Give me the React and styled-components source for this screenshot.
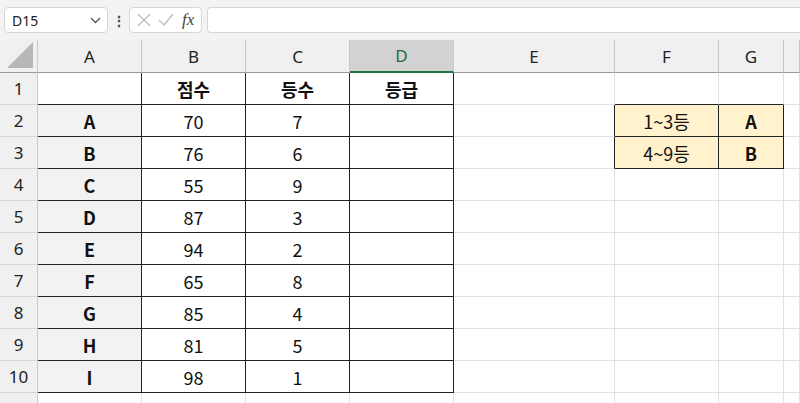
import React from "react";
import styled, { createGlobalStyle } from "styled-components";

const Global = createGlobalStyle`
  body { margin: 0; background: #fff; font-family: "Noto Sans CJK KR", "Noto Sans", sans-serif; overflow: hidden; }
`;

const Bar = styled.div`
  height: 40px; display: flex; align-items: center; gap: 0; background: #f3f3f3;
  padding-left: 4px; box-sizing: border-box;
`;
const NameBox = styled.div`
  width: 104px; height: 26px; box-sizing: border-box; border: 1px solid #d6d6d6; border-radius: 4px;
  background: #fff; display: flex; align-items: center; justify-content: space-between;
  padding: 0 6px 0 7px; font-size: 14px; color: #222; font-family: "Noto Sans", sans-serif;
`;
const Dots = styled.div`width: 21px; text-align: center; color: #444; font-size: 14px; font-weight: bold;`;
const FxBox = styled.div`
  width: 73px; height: 26px; box-sizing: border-box; border: 1px solid #d6d6d6; border-radius: 4px;
  background: #fff; display: flex; align-items: center; justify-content: space-around; padding: 0 3px;
  color: #bbb; font-size: 16px;
`;
const Fx = styled.span`font-family: "Liberation Serif", serif; font-style: italic; color: #444; font-size: 17px;`;
const Formula = styled.div`
  flex: 1; height: 26px; margin-left: 5px; box-sizing: border-box; border: 1px solid #d6d6d6;
  border-radius: 4px 0 0 4px; border-right: none; background: #fff;
`;

const Grid = styled.div`
  display: grid;
  grid-template-columns: 38px 104px 104px 104px 104px 161px 104px 65px 1fr;
  grid-template-rows: 33px repeat(10, 32px) 20px;
`;
const Corner = styled.div`
  background: #f0f0f0; border-right: 1px solid #c8c8c8; border-bottom: 1px solid #9a9a9a;
  position: relative;
  &::after { content: ""; position: absolute; right: 4px; bottom: 4px; width: 0; height: 0;
    border-left: 26px solid transparent; border-bottom: 26px solid #b7b7b7; }
`;
const ColHead = styled.div`
  background: ${p => (p.$sel ? "#d2d2d2" : "#f0f0f0")};
  color: ${p => (p.$sel ? "#1f6b3a" : "#222")};
  border-right: 1px solid #c8c8c8;
  border-bottom: ${p => (p.$sel ? "2px solid #217346" : "1px solid #9a9a9a")};
  display: flex; align-items: center; justify-content: center; font-size: 17px;
  font-family: "Noto Sans", sans-serif; box-sizing: border-box;
`;
const RowHead = styled.div`
  background: #f0f0f0; border-right: 1px solid #c8c8c8; border-bottom: 1px solid #d4d4d4;
  display: flex; align-items: center; justify-content: center; font-size: 17px; color: #222;
  font-family: "Noto Sans", sans-serif; box-sizing: border-box;
`;
const Cell = styled.div`
  box-sizing: border-box;
  background: ${p => p.$bg || "#fff"};
  border-right: 1px solid ${p => (p.$r ? "#222" : "#e1e1e1")};
  border-bottom: 1px solid ${p => (p.$b ? "#222" : "#e1e1e1")};
  display: flex; align-items: center; justify-content: center;
  font-size: 18px; color: #111; font-weight: ${p => (p.$bold ? 700 : 400)};
`;

const cols = ["A", "B", "C", "D", "E", "F", "G", ""];
const data = [
  ["", "점수", "등수", "등급"],
  ["A", "70", "7", ""], ["B", "76", "6", ""], ["C", "55", "9", ""], ["D", "87", "3", ""],
  ["E", "94", "2", ""], ["F", "65", "8", ""], ["G", "85", "4", ""], ["H", "81", "5", ""],
  ["I", "98", "1", ""],
];
const side = { 2: ["1~3등", "A"], 3: ["4~9등", "B"] };

export default function App() {
  const rows = [];
  for (let r = 1; r <= 11; r++) {
    rows.push(<RowHead key={"h" + r}>{r <= 10 ? r : ""}</RowHead>);
    for (let c = 0; c < 8; c++) {
      let text = "", bold = false, bg, right = false, bottom = false;
      if (r <= 10 && c < 4) {
        text = data[r - 1][c];
        bold = r === 1 || c === 0;
        if (c === 0 && r > 1) bg = "#f2f2f2";
        right = true; bottom = true;
      }
      if (r === 1 && (c === 5 || c === 6)) bottom = true;
      if ((r === 2 || r === 3) && c === 4) right = true;
      if ((r === 2 || r === 3) && (c === 5 || c === 6)) {
        text = side[r][c - 5]; bold = c === 6; bg = "#fff2cc"; right = true; bottom = true;
      }
      rows.push(<Cell key={r + "-" + c} $bold={bold} $bg={bg} $r={right} $b={bottom}>{text}</Cell>);
    }
  }
  return (
    <>
      <Global />
      <Bar>
        <NameBox>D15
          <svg width="11" height="7" viewBox="0 0 11 7"><path d="M1 1l4.5 4.5L10 1" fill="none" stroke="#555" strokeWidth="1.3" /></svg>
        </NameBox>
        <Dots>⋮</Dots>
        <FxBox>
          <svg width="14" height="14" viewBox="0 0 14 14"><path d="M1 1l12 12M13 1L1 13" stroke="#bbb" strokeWidth="1.2" /></svg>
          <svg width="16" height="14" viewBox="0 0 16 14"><path d="M1 7l5 5L15 1" fill="none" stroke="#bbb" strokeWidth="1.2" /></svg>
          <Fx>fx</Fx>
        </FxBox>
        <Formula />
      </Bar>
      <Grid>
        <Corner />
        {cols.map((c, i) => <ColHead key={i} $sel={c === "D"}>{c}</ColHead>)}
        {rows}
      </Grid>
    </>
  );
}
